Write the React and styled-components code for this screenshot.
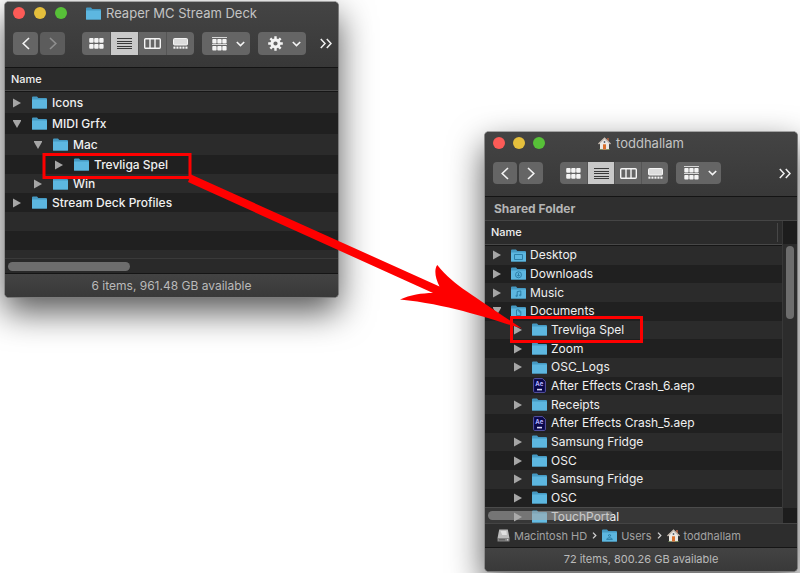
import React from 'react'
import styled, { createGlobalStyle, css, ThemeProvider } from 'styled-components'

const GlobalStyle = createGlobalStyle`
  * {
    box-sizing: border-box;
  }
  body {
    margin: 0;
    background: #fff;
    font-family: Inter, "Liberation Sans", sans-serif;
    font-size: 12px;
  }
  button {
    padding: 0;
    border: 0;
    background: none;
    color: inherit;
    font: inherit;
  }
`

// measurements that differ between the two Finder windows
const large = { button: 25, tool: 23, segment: 28, menu: 48, light: 9, rowGap: 11, iconGap: 5, status: 12, weight: 500 }
const small = { button: 24, tool: 22, segment: 27, menu: 45, light: 8, rowGap: 10, iconGap: 4, status: 11, weight: 400 }

const Desktop = styled.main`
  position: relative;
  display: flex;
  justify-content: space-between;
  align-items: flex-start;
  min-height: 100vh;
  padding: 1px 2px 1px 4px;
  overflow: hidden;
`
const Window = styled.section`
  flex: 0 1 ${(props) => props.$width}px;
  margin-top: ${(props) => props.$top || 0}px;
  border: 1px solid #8c8c8c;
  border-color: #a2a2a2 #7c7c7c #7c7c7c #8c8c8c;
  border-radius: 5px;
  background: #2a2a2a;
  color: #f0f0f0;
  box-shadow: 0 14px 34px rgba(0, 0, 0, 0.66);
`
const Chrome = styled.header`
  border-bottom: 1px solid #141414;
  border-radius: 4px 4px 0 0;
  background: linear-gradient(#444, #383838);
`
const TitleBar = styled.div`
  display: grid;
  grid-template-columns: 1fr auto 1fr;
  align-items: center;
  height: 22px;
  padding: 0 8px;
`
const Lights = styled.div`
  display: flex;
  gap: ${({ theme }) => theme.light}px;
`
const Light = styled.button`
  width: 12px;
  height: 12px;
  border-radius: 50%;
  background: ${(props) => props.$color};
`
const Title = styled.h1`
  display: flex;
  align-items: center;
  gap: 5px;
  margin: 0;
  color: #c4c4c4;
  font-size: 13px;
  font-weight: 400;
  line-height: 16px;
  white-space: nowrap;
`
const Toolbar = styled.div`
  display: flex;
  align-items: center;
  gap: 8px;
  padding: 8px 6px 12px 8px;
`
const NavGroup = styled.div`
  display: flex;
  gap: 2px;
  margin-right: 9px;
`
const tool = css`
  display: flex;
  align-items: center;
  justify-content: center;
  height: ${({ theme }) => theme.tool}px;
  background: #656565;
  color: #f4f4f4;
`
const NavButton = styled.button`
  ${tool}
  width: ${({ theme }) => theme.button}px;
  border-radius: 4px;
  &:disabled {
    background: #5c5c5c;
    color: #8f8f8f;
  }
`
const Segments = styled.div`
  display: flex;
  border-radius: 4px;
  overflow: hidden;
`
const Segment = styled.button`
  ${tool}
  width: ${({ theme }) => theme.segment}px;
  & + & {
    border-left: 1px solid #555;
  }
  &[aria-pressed='true'] {
    background: #c9c9c9;
    color: #3a3a3a;
  }
`
const MenuButton = styled.button`
  ${tool}
  gap: 9px;
  width: ${({ theme }) => theme.menu}px;
  padding-left: 4px;
  border-radius: 4px;
`
const MoreButton = styled.button`
  display: flex;
  margin-left: auto;
  color: #f0f0f0;
`
const SharedBar = styled.div`
  height: 24px;
  padding: 0 9px;
  border-bottom: 1px solid #454545;
  background: #2f2f2f;
  color: #b4b4b4;
  font-weight: 700;
  line-height: 24px;
`
const ListArea = styled.div`
  display: grid;
  grid-template-columns: 1fr 15px;
`
const ListPane = styled.div`
  position: relative;
  height: ${(props) => props.$height}px;
  overflow: hidden;
`
const FileTable = styled.table`
  display: block;
`
const TableHead = styled.thead`
  display: block;
  border-bottom: 1px solid #161616;
`
const HeadRow = styled.tr`
  display: flex;
  height: ${(props) => props.$height}px;
  border-bottom: 1px solid #484848;
  background: #2b2b2b;
`
const HeadCell = styled.th`
  flex: 1;
  margin: 2px 4px 2px 0;
  padding: 0 6px;
  border-right: ${(props) => (props.$divider ? '1px solid #474747' : '0')};
  font-size: 11px;
  font-weight: 500;
  line-height: 18px;
  text-align: left;
`
const EvenRows = styled.tbody`
  display: grid;
  grid-auto-rows: 1fr;
  height: 280px;
`
const Rows = styled.tbody`
  display: block;
`
const Row = styled.tr`
  display: flex;
  align-items: center;
  height: ${(props) => (props.$height ? props.$height + 'px' : 'auto')};
  background: #202020;
  &:nth-child(odd) {
    background: #2b2b2b;
  }
`
const NameCell = styled.td`
  display: flex;
  align-items: center;
  gap: ${({ theme }) => theme.iconGap}px;
  padding: 0 0 0 ${(props) => 8 + props.$depth * 21}px;
  font-weight: ${({ theme }) => theme.weight};
  line-height: 16px;
  white-space: nowrap;
`
const Disclosure = styled.button`
  display: flex;
  justify-content: center;
  width: 8px;
  margin-right: ${({ theme }) => theme.rowGap - theme.iconGap}px;
  visibility: ${(props) => (props.$hidden ? 'hidden' : 'visible')};
`
const IconSlot = styled.span`
  display: flex;
  justify-content: center;
  width: 15px;
`
const OverlayTrack = styled.div`
  position: absolute;
  left: 0;
  right: 0;
  bottom: 0;
  height: 16px;
  padding: 3px;
  border-top: 1px solid rgba(255, 255, 255, 0.1);
  background: rgba(255, 255, 255, 0.06);
`
const HorizontalTrack = styled.div`
  height: 15px;
  padding: 3px;
  border-top: 1px solid #3a3a3a;
  background: #292929;
`
const Thumb = styled.div`
  width: ${(props) => props.$width}px;
  height: 9px;
  border-radius: 5px;
  background: ${(props) => props.$color || '#6d6d6d'};
`
const VerticalScroll = styled.div`
  display: flex;
  flex-direction: column;
  border-left: 1px solid #383838;
  background: #2c2c2c;
`
const Corner = styled.div`
  height: ${(props) => props.$height}px;
  background: #1d1d1d;
`
const VerticalTrack = styled.div`
  flex: 1;
  padding: 2px 3px;
`
const VerticalThumb = styled.div`
  width: 8px;
  height: 73px;
  border-radius: 4px;
  background: #6d6d6d;
`
const PathBar = styled.nav`
  display: flex;
  align-items: center;
  gap: 5px;
  height: 24px;
  padding: 0 12px;
  border-top: 1px solid #444;
  background: #2d2d2d;
  color: #a2a2a2;
  font-size: 11px;
`
const PathLink = styled.a`
  display: flex;
  align-items: center;
  gap: 4px;
  color: inherit;
  text-decoration: none;
  line-height: 16px;
`
const StatusBar = styled.footer`
  height: 24px;
  border-top: 1px solid #151515;
  border-radius: 0 0 4px 4px;
  background: linear-gradient(#434343, #393939);
  color: #bababa;
  font-size: ${({ theme }) => theme.status}px;
  line-height: 23px;
  text-align: center;
`
const Annotations = styled.svg`
  position: absolute;
  top: 0;
  left: 0;
  pointer-events: none;
`

const Folder = ({ badge }) => (
  <svg width="15" height="13" viewBox="0 0 15 13">
    <path d="M0 1.5Q0 .5 1 .5H5L6.3 2H14Q15 2 15 3V12Q15 12.5 14.4 12.5H.6Q0 12.5 0 12Z" fill="#4599c2" />
    <path d="M0 3.6H15V12Q15 12.5 14.4 12.5H.6Q0 12.5 0 12Z" fill="#5db7e0" />
    <g fill="none" stroke="#2c7fa8" strokeWidth="1">
      {badge === 'desktop' && <path d="M3.5 5.5H11.5V10.5H3.5Z" />}
      {badge === 'downloads' && (
        <>
          <circle cx="7.5" cy="7.8" r="3" />
          <path d="M7.5 6V9M6 7.8L7.5 9.3L9 7.8" />
        </>
      )}
      {badge === 'music' && (
        <>
          <path d="M6.2 9.7V5.6L9.8 4.9V9" />
          <circle cx="5.6" cy="9.9" r=".7" />
          <circle cx="9.2" cy="9.2" r=".7" />
        </>
      )}
      {badge === 'documents' && <path d="M5.5 4.9H8.2L9.8 6.6V10.6H5.5ZM8 5V7H9.8" />}
      {badge === 'users' && <path d="M4.6 10.4Q5 8.8 7.5 8.8T10.4 10.4ZM7.5 5.6A1 1 0 1 0 7.6 5.6Z" />}
    </g>
  </svg>
)

const AeFile = () => (
  <svg width="13" height="15" viewBox="0 0 13 15">
    <path d="M1.5.6H9.4L12.4 3.4V13.4Q12.4 14.4 11.4 14.4H1.6Q.6 14.4 .6 13.4V1.5Q.6.6 1.5.6Z" fill="#09074b" stroke="#5956a8" />
    <text x="6.3" y="8" textAnchor="middle" fontSize="6" fontWeight="700" fill="#b6b3ff">Ae</text>
    <path d="M4 11.6H9" stroke="#d9d8f5" strokeWidth="1.6" />
  </svg>
)

const House = () => (
  <svg width="13" height="13" viewBox="0 0 13 13">
    <path d="M9 1H11V4H9Z" fill="#9b5a42" />
    <path d="M2 6L6.5 1.8L11 6V12.5H2Z" fill="#ece9e4" />
    <path d="M.5 7L6.5 1.2L12.5 7" fill="none" stroke="#c9beb4" strokeWidth="1.4" />
    <path d="M5 7.3H8V12.5H5Z" fill="#d9702c" />
    <circle cx="6.5" cy="5" r=".9" fill="#54616d" />
    <path d="M1.5 12.5H4.5M8.5 12.5H11.5" stroke="#7c9160" />
  </svg>
)

const Drive = () => (
  <svg width="13" height="13" viewBox="0 0 13 13">
    <path d="M2.2.5H10.8L12.5 9.3H.5Z" fill="#bcbcbc" />
    <path d="M.5 9H12.5V12.5H.5Z" fill="#858585" />
    <path d="M3.5 2H9.3L9.8 6H5.2Z" fill="#e0e0e0" />
    <path d="M2 10.8H8" stroke="#555" />
    <circle cx="10.6" cy="10.8" r=".7" fill="#ddd" />
  </svg>
)

const Triangle = ({ open }) => (
  <svg width="8" height="10" viewBox="0 0 8 10">
    <path d={open ? 'M-.5 1H8.5L4 9Z' : 'M0 .5L8 5L0 9.5Z'} fill="#a6a6a6" />
  </svg>
)

const Chevron = ({ flip }) => (
  <svg width="8" height="13" viewBox="0 0 8 13" fill="none" stroke="currentColor" strokeWidth="1.6">
    <path d={flip ? 'M1 1L6.8 6.5L1 12' : 'M7 1L1.2 6.5L7 12'} />
  </svg>
)

const ChevronDown = () => (
  <svg width="9" height="6" viewBox="0 0 9 6" fill="none" stroke="currentColor" strokeWidth="1.6">
    <path d="M.8 1L4.5 4.6L8.2 1" />
  </svg>
)

const PathChevron = () => (
  <svg width="5" height="7" viewBox="0 0 5 7" fill="none" stroke="#d0d0d0" strokeWidth="1.3">
    <path d="M1 .6L3.8 3.5L1 6.4" />
  </svg>
)

const IconView = () => (
  <svg width="15" height="11" viewBox="0 0 15 11" fill="currentColor">
    {[0, 6].map((y) => [0, 5, 10].map((x) => <rect key={x + '-' + y} x={x + 0.2} y={y} width="4.4" height="4.8" rx="1" />))}
  </svg>
)

const ListView = () => (
  <svg width="15" height="13" viewBox="0 0 15 13" stroke="currentColor">
    <path d="M0 1.5H15M0 4.5H15M0 6.5H15M0 9.5H15M0 11.5H15" strokeWidth="1.1" />
  </svg>
)

const ColumnView = () => (
  <svg width="17" height="11" viewBox="0 0 17 11" fill="none" stroke="currentColor">
    <rect x=".7" y=".7" width="15.6" height="9.6" rx="1" strokeWidth="1.4" />
    <path d="M6 1V10M11 1V10" strokeWidth="1.4" />
  </svg>
)

const GalleryView = () => (
  <svg width="15" height="11" viewBox="0 0 15 11" fill="currentColor">
    <rect x=".5" y=".5" width="14" height="6.5" rx="1" fill="#dcdcdc" stroke="currentColor" />
    {[0, 3, 6, 9, 12].map((x) => <rect key={x} x={x + 0.4} y="8.6" width="2.1" height="2.1" />)}
  </svg>
)

const GroupIcon = () => (
  <svg width="15" height="14" viewBox="0 0 15 14" fill="currentColor">
    <path d="M0 0H15V1H0ZM0 7H15V8H0Z" opacity=".8" />
    {[2, 9].map((y) => [0, 5, 10].map((x) => <rect key={x + '-' + y} x={x + 0.3} y={y} width="4.3" height="4.5" rx=".8" />))}
  </svg>
)

const Gear = () => (
  <svg width="15" height="15" viewBox="0 0 15 15" fill="none" stroke="currentColor">
    <circle cx="7.5" cy="7.5" r="3.6" strokeWidth="3" />
    {[0, 45, 90, 135].map((angle) => (
      <path key={angle} d="M7.5 .2V3M7.5 12V14.8" strokeWidth="2.4" transform={`rotate(${angle} 7.5 7.5)`} />
    ))}
  </svg>
)

const DoubleChevron = () => (
  <svg width="12" height="11" viewBox="0 0 12 11" fill="none" stroke="currentColor" strokeWidth="1.5">
    <path d="M.8 1L5 5.5L.8 10M6.8 1L11 5.5L6.8 10" />
  </svg>
)

const WindowHeader = ({ title, icon, canGoForward, gear }) => (
  <Chrome>
    <TitleBar>
      <Lights>
        <Light $color="#fc5b57" aria-label="Close" />
        <Light $color="#e5bf3c" aria-label="Minimize" />
        <Light $color="#57c038" aria-label="Zoom" />
      </Lights>
      <Title>{icon}{title}</Title>
    </TitleBar>
    <Toolbar>
      <NavGroup>
        <NavButton aria-label="Back"><Chevron /></NavButton>
        <NavButton aria-label="Forward" disabled={!canGoForward}><Chevron flip /></NavButton>
      </NavGroup>
      <Segments>
        <Segment aria-label="Icons"><IconView /></Segment>
        <Segment aria-label="List" aria-pressed="true"><ListView /></Segment>
        <Segment aria-label="Columns"><ColumnView /></Segment>
        <Segment aria-label="Gallery"><GalleryView /></Segment>
      </Segments>
      <MenuButton aria-label="Group"><GroupIcon /><ChevronDown /></MenuButton>
      {gear && <MenuButton aria-label="Action"><Gear /><ChevronDown /></MenuButton>}
      <MoreButton aria-label="More"><DoubleChevron /></MoreButton>
    </Toolbar>
  </Chrome>
)

const FileRow = ({ name, depth = 0, open, file, badge, height }) => (
  <Row $height={height}>
    {name && (
      <NameCell $depth={depth}>
        <Disclosure $hidden={file} aria-label={'Toggle ' + name} aria-expanded={!!open}>
          <Triangle open={open} />
        </Disclosure>
        <IconSlot>{file ? <AeFile /> : <Folder badge={badge} />}</IconSlot>
        {name}
      </NameCell>
    )}
  </Row>
)

const deckFiles = [
  { name: 'Icons', height: 21 },
  { name: 'MIDI Grfx', open: true, height: 21 },
  { name: 'Mac', depth: 1, open: true, height: 21 },
  { name: 'Trevliga Spel', depth: 2, height: 19 },
  { name: 'Win', depth: 1, height: 19 },
  { name: 'Stream Deck Profiles', height: 19 },
  { height: 19 },
  { height: 19 },
  { height: 19 },
]

const homeFiles = [
  { name: 'Desktop', badge: 'desktop' },
  { name: 'Downloads', badge: 'downloads' },
  { name: 'Music', badge: 'music' },
  { name: 'Documents', badge: 'documents', open: true },
  { name: 'Trevliga Spel', depth: 1 },
  { name: 'Zoom', depth: 1 },
  { name: 'OSC_Logs', depth: 1 },
  { name: 'After Effects Crash_6.aep', depth: 1, file: true },
  { name: 'Receipts', depth: 1 },
  { name: 'After Effects Crash_5.aep', depth: 1, file: true },
  { name: 'Samsung Fridge', depth: 1 },
  { name: 'OSC', depth: 1 },
  { name: 'Samsung Fridge', depth: 1 },
  { name: 'OSC', depth: 1 },
  { name: 'TouchPortal', depth: 1 },
]

const App = () => {
  return (
    <Desktop>
      <GlobalStyle />
      <ThemeProvider theme={large}>
        <Window $width={335}>
          <WindowHeader title="Reaper MC Stream Deck" icon={<Folder />} gear />
          <ListPane $height={190}>
            <FileTable>
              <TableHead>
                <HeadRow $height={23}><HeadCell scope="col">Name</HeadCell></HeadRow>
              </TableHead>
              <Rows>
                {deckFiles.map((item, i) => <FileRow key={i} {...item} />)}
              </Rows>
            </FileTable>
          </ListPane>
          <HorizontalTrack><Thumb $width={122} /></HorizontalTrack>
          <StatusBar>6 items, 961.48 GB available</StatusBar>
        </Window>
      </ThemeProvider>
      <ThemeProvider theme={small}>
        <Window $width={314} $top={130}>
          <WindowHeader title="toddhallam" icon={<House />} canGoForward />
          <SharedBar>Shared Folder</SharedBar>
          <ListArea>
            <ListPane $height={302}>
              <FileTable>
                <TableHead>
                  <HeadRow $height={24}><HeadCell scope="col" $divider>Name</HeadCell></HeadRow>
                </TableHead>
                <EvenRows>
                  {homeFiles.map((item, i) => <FileRow key={i} {...item} />)}
                </EvenRows>
              </FileTable>
              <OverlayTrack><Thumb $width={125} $color="rgba(170, 170, 170, 0.55)" /></OverlayTrack>
            </ListPane>
            <VerticalScroll>
              <Corner $height={23} />
              <VerticalTrack><VerticalThumb /></VerticalTrack>
              <Corner $height={15} />
            </VerticalScroll>
          </ListArea>
          <PathBar>
            <PathLink href="#hd"><Drive />Macintosh HD</PathLink>
            <PathChevron />
            <PathLink href="#users"><Folder badge="users" />Users</PathLink>
            <PathChevron />
            <PathLink href="#home"><House />toddhallam</PathLink>
          </PathBar>
          <StatusBar>72 items, 800.26 GB available</StatusBar>
        </Window>
      </ThemeProvider>
      <Annotations width="800" height="573" viewBox="0 0 800 573" aria-hidden="true">
        <g fill="none" stroke="#fe0000" strokeWidth="3">
          <rect x="44" y="154.5" width="146" height="23" />
          <rect x="511.5" y="317.5" width="130" height="24" />
        </g>
        <path
          d="M191 174.5L439.5 286.5C435 278 434 269 437.3 265C446 276 456 284 467 291.5C482 302 500 314 522 328.5C498 322 455 305 400 299.5C410 295 422 293 433 293L188 182Z"
          fill="#fe0000"
        />
      </Annotations>
    </Desktop>
  )
}

export default App
